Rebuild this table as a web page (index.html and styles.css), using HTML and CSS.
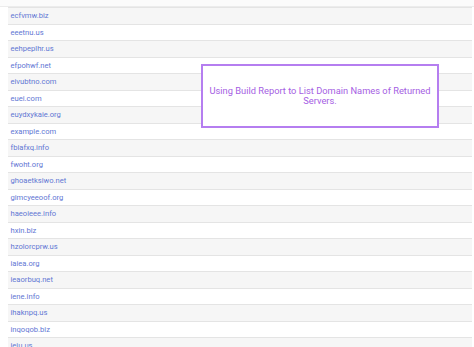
FILE: index.html
```html
<!DOCTYPE html>
<html>
<head>
<meta charset="utf-8">
<link rel="stylesheet" href="styles.css">
</head>
<body>
<div class="page">
  <div class="topband"></div>
  <ul class="list">
    <li class="row">ecfvmw.biz</li>
    <li class="row">eeetnu.us</li>
    <li class="row">eehpeplhr.us</li>
    <li class="row">efpohwf.net</li>
    <li class="row">eivubtno.com</li>
    <li class="row">euei.com</li>
    <li class="row">euydxykaie.org</li>
    <li class="row">example.com</li>
    <li class="row">fbiafxq.info</li>
    <li class="row">fwoht.org</li>
    <li class="row">ghoaetksiwo.net</li>
    <li class="row">gimcyeeoof.org</li>
    <li class="row">haeoieee.info</li>
    <li class="row">hxin.biz</li>
    <li class="row">hzolorcprw.us</li>
    <li class="row">iaiea.org</li>
    <li class="row">ieaorbuq.net</li>
    <li class="row">iene.info</li>
    <li class="row">ihaknpq.us</li>
    <li class="row">inqoqob.biz</li>
    <li class="row">ieiu.us</li>
  </ul>
  <div class="note">Using Build Report to List Domain Names of Returned Servers.</div>
</div>
</body>
</html>
```

FILE: styles.css
```css
html, body {
  margin: 0;
  padding: 0;
  background: #ffffff;
  overflow: hidden;
}
.page {
  position: relative;
  width: 474px;
  height: 347px;
  overflow: hidden;
  font-family: Roboto, "Liberation Sans", sans-serif;
}
.topband {
  height: 7px;
  background: #fbfbfb;
  border-bottom: 1px solid #ececec;
  box-sizing: border-box;
}
.list {
  list-style: none;
  margin: 0 2px 0 8px;
  padding: 0;
}
.row {
  height: 16.5px;
  box-sizing: border-box;
  border-top: 1px solid #e4e4e4;
  padding-left: 2.5px;
  font-size: 7.6px;
  line-height: 15.5px;
  color: #6276d4;
  white-space: nowrap;
}
.row:nth-child(odd) {
  background: #f6f6f6;
}
.note {
  position: absolute;
  left: 201px;
  top: 64px;
  width: 238px;
  height: 64px;
  box-sizing: border-box;
  border: 2px solid #b57ef0;
  background: #ffffff;
  color: #a55ee3;
  font-size: 9.3px;
  line-height: 10.5px;
  text-align: center;
  display: flex;
  align-items: center;
  justify-content: center;
  padding: 0 4px;
}
```
